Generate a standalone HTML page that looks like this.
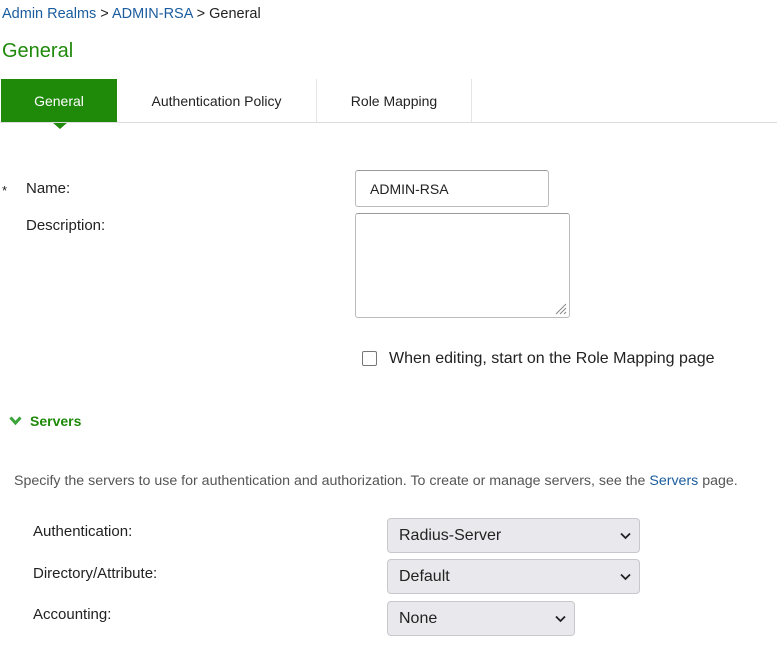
<!DOCTYPE html>
<html><head><style>
body{margin:0;width:777px;height:657px;background:#fff;font-family:"Liberation Sans",Arial,sans-serif;position:relative;overflow:hidden;color:#222}
.a{position:absolute;white-space:nowrap}
.sel{position:absolute;background:#e9e9ed;border:1px solid #c8c8cc;border-radius:4px;box-sizing:border-box;font-size:16px;color:#222;padding:8px 0 0 11px}
.sel svg{position:absolute;right:8px;top:13px}
</style></head><body>
<div class="a" style="left:2px;top:6px;font-size:14.5px"><span style="color:#1a5c9e">Admin Realms</span> &gt; <span style="color:#1a5c9e">ADMIN-RSA</span> &gt; General</div>
<div class="a" style="left:2px;top:40px;font-size:20px;color:#1f8a0a">General</div>
<div class="a" style="left:1px;top:79px;width:116px;height:43px;background:#1f8a0a;color:#fff;font-size:14px;text-align:center;line-height:44px">General</div>
<div class="a" style="left:52px;top:122px;width:0;height:0;border-left:8px solid transparent;border-right:8px solid transparent;border-top:7px solid #1f8a0a"></div>
<div class="a" style="left:117px;top:79px;width:200px;height:43px;font-size:14px;text-align:center;line-height:44px;border-right:1px solid #e4e4e4;box-sizing:border-box">Authentication Policy</div>
<div class="a" style="left:317px;top:79px;width:155px;height:43px;font-size:14px;text-align:center;line-height:44px;border-right:1px solid #e4e4e4;box-sizing:border-box">Role Mapping</div>
<div class="a" style="left:0;top:122px;width:777px;height:1px;background:#ddd"></div>
<div class="a" style="left:2px;top:183px;font-size:13px">*</div>
<div class="a" style="left:26px;top:180px;font-size:15px">Name:</div>
<div class="a" style="left:26px;top:217px;font-size:15px">Description:</div>
<div class="a" style="left:355px;top:170px;width:194px;height:37px;border:1px solid #bbb;border-top-color:#999;border-radius:3px;box-sizing:border-box;font-size:14px;padding:10px 0 0 14px">ADMIN-RSA</div>
<div class="a" style="left:355px;top:213px;width:215px;height:105px;border:1px solid #bbb;border-top-color:#999;border-radius:3px;box-sizing:border-box">
<svg width="12" height="12" style="position:absolute;right:2px;bottom:2px"><path d="M11 1L1 11M11 5L5 11M11 9L9 11" stroke="#888" stroke-width="1"/></svg></div>
<div class="a" style="left:362px;top:351px;width:15px;height:15px;border:1.5px solid #777;border-radius:2px;box-sizing:border-box"></div>
<div class="a" style="left:389px;top:350px;font-size:16px">When editing, start on the Role Mapping page</div>
<svg class="a" style="left:9px;top:416px" width="13" height="10"><path d="M1.5 1.5L6.5 7L11.5 1.5" stroke="#3aa43a" stroke-width="3" fill="none"/></svg>
<div class="a" style="left:30px;top:413px;font-size:14px;font-weight:bold;color:#1f8a0a">Servers</div>
<div class="a" style="left:14px;top:473px;font-size:14.2px;color:#555">Specify the servers to use for authentication and authorization. To create or manage servers, see the <span style="color:#1a5c9e">Servers</span> page.</div>
<div class="a" style="left:33px;top:523px;font-size:15px">Authentication:</div>
<div class="a" style="left:33px;top:565px;font-size:15px">Directory/Attribute:</div>
<div class="a" style="left:33px;top:606px;font-size:15px">Accounting:</div>
<div class="sel" style="left:387px;top:518px;width:253px;height:35px">Radius-Server<svg width="11" height="8"><path d="M1 1.5L5.5 6L10 1.5" stroke="#222" stroke-width="1.8" fill="none"/></svg></div>
<div class="sel" style="left:387px;top:559px;width:253px;height:35px">Default<svg width="11" height="8"><path d="M1 1.5L5.5 6L10 1.5" stroke="#222" stroke-width="1.8" fill="none"/></svg></div>
<div class="sel" style="left:387px;top:601px;width:188px;height:35px">None<svg width="11" height="8"><path d="M1 1.5L5.5 6L10 1.5" stroke="#222" stroke-width="1.8" fill="none"/></svg></div>
</body></html>
